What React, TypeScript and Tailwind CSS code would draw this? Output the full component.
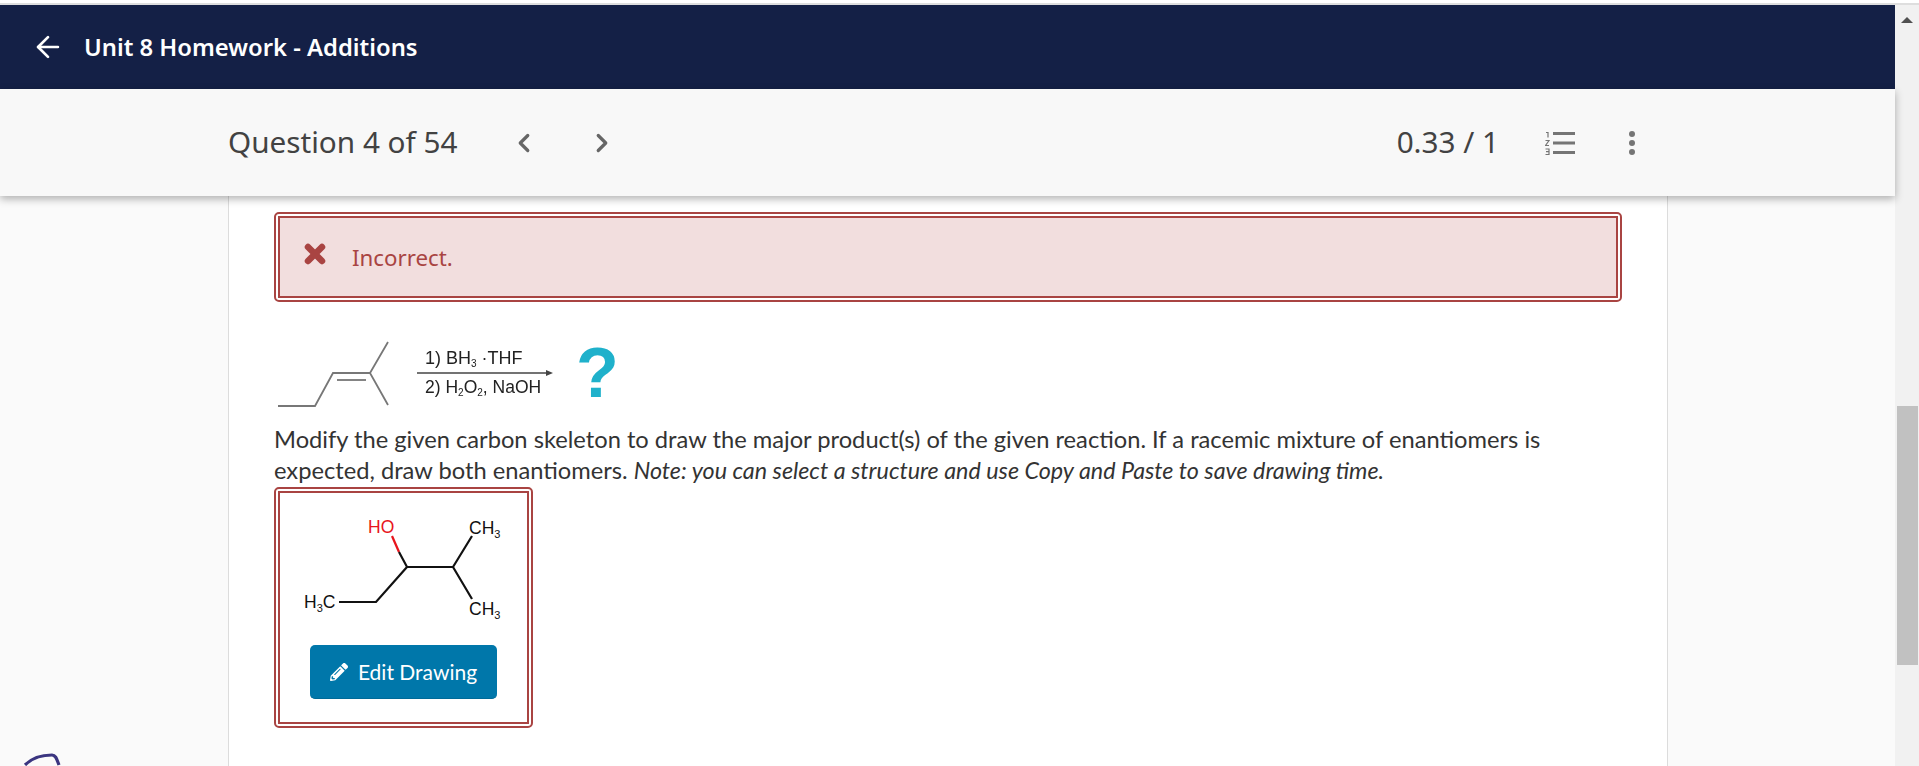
import { ArrowLeft, ChevronLeft, ChevronRight } from "lucide-react";
import { FaPencilAlt } from "react-icons/fa";

function ListIcon() {
    return (
        <svg width="30" height="24" viewBox="0 0 30 24" className="text-[#757575]">
            <rect x="8" y="1" width="22" height="3" fill="currentColor" />
            <rect x="8" y="10.5" width="22" height="3" fill="currentColor" />
            <rect x="8" y="20" width="22" height="3" fill="currentColor" />
            <path d="M1 1.5h2v5M0.5 9.5h3.5l-3.5 5h3.5M0.5 18h3.5v5.5h-3.5M1 20.7h3" fill="none" stroke="currentColor" strokeWidth="1.2" />
        </svg>
    );
}

function Reaction() {
    return (
        <svg width="350" height="89" viewBox="0 0 350 89" className="block blur-[0.4px]">
            <g fill="none" stroke="#777" strokeWidth="1.8">
                <path d="M4 71H41L59 38H96" />
                <path d="M63 45H92" />
                <path d="M114 7L96 38L114 70" />
            </g>
            <path d="M143 38H274" stroke="#444" strokeWidth="1.4" />
            <path d="M279 38l-7-3v6z" fill="#444" />
            <text x="151" y="29" fontFamily="Liberation Sans" fontSize="18" fill="#222">
                1) BH<tspan fontSize="10" dy="3">3</tspan>
                <tspan dy="-3"> ·THF</tspan>
            </text>
            <text x="151" y="58" fontFamily="Liberation Sans" fontSize="17.5" fill="#222">
                2) H<tspan fontSize="10" dy="3">2</tspan>
                <tspan dy="-3">O</tspan>
                <tspan fontSize="10" dy="3">2</tspan>
                <tspan dy="-3">, NaOH</tspan>
            </text>
            <text x="302" y="62" fontFamily="Liberation Sans" fontSize="70" fontWeight="700" fill="#1fb1cb">?</text>
        </svg>
    );
}

function Molecule() {
    return (
        <svg width="215" height="114" viewBox="0 0 215 114" className="ml-[8px] block overflow-visible">
            <path d="M92 17L99 33" stroke="#e8141c" strokeWidth="2.2" fill="none" />
            <path d="M99 33L107 48H153L172 17M153 48L172 80M107 48L76 83H39" stroke="#111" strokeWidth="2.2" fill="none" />
            <g fontFamily="Liberation Sans" fontSize="17.5" fill="#111">
                <text x="68" y="14" fill="#e8141c">HO</text>
                <text x="169" y="15">CH<tspan fontSize="11" dy="4">3</tspan></text>
                <text x="169" y="96">CH<tspan fontSize="11" dy="4">3</tspan></text>
                <text x="4" y="89">H<tspan fontSize="11" dy="4">3</tspan><tspan dy="-4">C</tspan></text>
            </g>
        </svg>
    );
}

export default function App() {
    return (
        <div className="relative flex h-[766px] w-[1919px] flex-col overflow-hidden bg-white font-['Noto_Sans',sans-serif]">
            {/* полоска сверху */}
            <div className="h-[5px] shrink-0 pt-[3px]">
                <div className="h-[2px] bg-[#dedede]" />
            </div>

            <div className="flex min-h-0 flex-1">
                <div className="relative flex min-w-0 flex-1 flex-col bg-[#fafafa]">
                    <header className="flex h-[84px] shrink-0 items-center bg-[#142046] pl-[31px] text-white">
                        <ArrowLeft size={34} strokeWidth={1.9} />
                        <span className="ml-[19px] mt-[1px] text-[23.8px] font-semibold">Unit 8 Homework - Additions</span>
                    </header>

                    <div className="relative z-10 flex h-[107px] shrink-0 items-center bg-[#f8f8f8] pl-[228px] pr-[260px] text-[#424242] shadow-[0_3px_8px_rgba(0,0,0,0.3)]">
                        <span className="text-[29.7px]">Question 4 of 54</span>
                        <ChevronLeft size={30} strokeWidth={2.6} className="ml-[52px] text-[#666]" />
                        <ChevronRight size={30} strokeWidth={2.6} className="ml-[48px] text-[#666]" />
                        <span className="ml-auto text-[29.7px]">0.33 / 1</span>
                        <div className="ml-[46px]">
                            <ListIcon />
                        </div>
                        <div className="ml-[54px] flex flex-col gap-[3px]">
                            <span className="h-[6px] w-[6px] rounded-full bg-[#757575]" />
                            <span className="h-[6px] w-[6px] rounded-full bg-[#757575]" />
                            <span className="h-[6px] w-[6px] rounded-full bg-[#757575]" />
                        </div>
                    </div>

                    <div className="ml-[228px] mr-[227px] min-h-0 flex-1 border-x border-[#dcdcdc] bg-white pl-[45px] pr-[45px] pt-[16px]">
                        {/* alert */}
                        <div className="h-[90px] rounded-[5px] border-2 border-[#a94442] p-[2px]">
                            <div className="flex h-full items-center border-2 border-[#a94442] bg-[#f2dede] pl-[24px] text-[#a94442]">
                                <svg width="22" height="22" viewBox="0 0 22 22" className="-mt-[6px]">
                                    <path d="M4 4L18 18M18 4L4 18" stroke="currentColor" strokeWidth="6.5" strokeLinecap="round" fill="none" />
                                </svg>
                                <span className="ml-[26px] mt-[2px] text-[22.3px]">Incorrect.</span>
                            </div>
                        </div>

                        <div className="mt-[33px]">
                            <Reaction />
                        </div>

                        <p className="w-[1340px] font-['Lato',sans-serif] text-[23.7px] leading-[31px] text-[#333]">
                            Modify the given carbon skeleton to draw the major product(s) of the given reaction. If a racemic mixture of enantiomers is expected, draw both enantiomers. <em className="text-[23.3px]">Note: you can select a structure and use Copy and Paste to save drawing time.</em>
                        </p>

                        <div className="mt-[1px] h-[241px] w-[259px] rounded-[5px] border-2 border-[#a94442] p-[2px]">
                            <div className="flex h-full flex-col items-center border-2 border-[#a94442] pt-[26px]">
                                <Molecule />
                                <button className="mt-[12px] flex h-[54px] w-[187px] items-center justify-center gap-[10px] rounded-[5px] border-b border-[#006a98] bg-[#0077aa] font-['Lato',sans-serif] text-[21px] text-white">
                                    <FaPencilAlt size={18} />
                                    Edit Drawing
                                </button>
                            </div>
                        </div>
                    </div>

                    {/* кусок фигуры снизу слева */}
                    <svg width="70" height="14" viewBox="0 0 70 14" className="absolute bottom-0 left-0">
                        <path d="M25 13C31 7 40 3 52 3C56 3 57 8 59 13" fill="none" stroke="#3b3580" strokeWidth="3.2" />
                    </svg>
                </div>

                {/* scrollbar */}
                <div className="relative w-[24px] shrink-0 bg-[#f1f1f1]">
                    <div className="mx-auto mt-[12px] h-0 w-0 border-x-[6px] border-b-[6px] border-x-transparent border-b-[#505050]" />
                    <div className="absolute left-[2px] right-[1px] top-[401px] h-[259px] bg-[#c1c1c1]" />
                </div>
            </div>
        </div>
    );
}
